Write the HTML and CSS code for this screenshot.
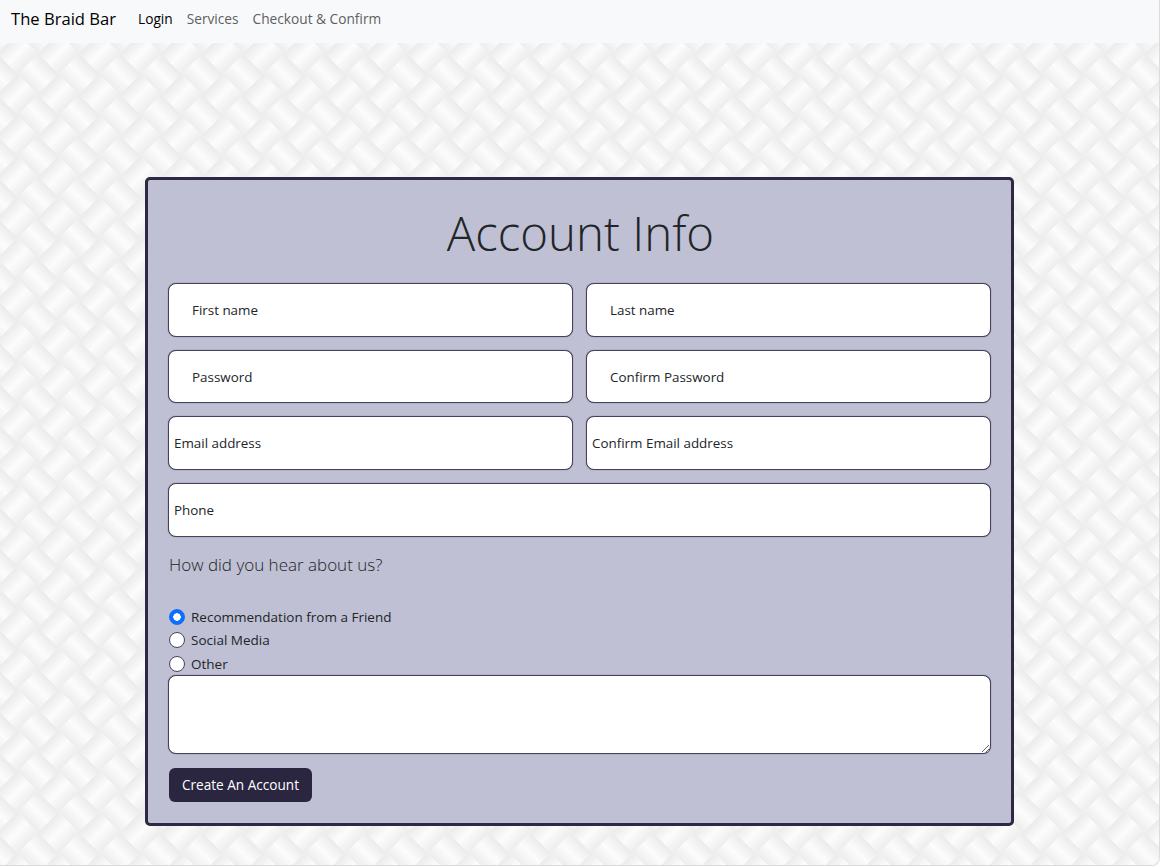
FILE: index.html
```html
<!DOCTYPE html>
<html lang="en">
<head>
<meta charset="utf-8">
<title>The Braid Bar</title>
<link rel="stylesheet" href="styles.css">
</head>
<body>
<div class="frame">
  <nav class="navbar">
    <a class="brand" href="#">The Braid Bar</a>
    <a class="nav-link active" href="#">Login</a>
    <a class="nav-link" href="#">Services</a>
    <a class="nav-link" href="#">Checkout &amp; Confirm</a>
  </nav>
  <main class="page">
    <form class="card">
      <h1 class="title">Account Info</h1>
      <div class="fields">
        <input class="field floating" type="text" placeholder="First name">
        <input class="field floating" type="text" placeholder="Last name">
        <input class="field floating" type="text" placeholder="Password">
        <input class="field floating" type="text" placeholder="Confirm Password">
        <input class="field" type="text" placeholder="Email address">
        <input class="field" type="text" placeholder="Confirm Email address">
        <input class="field wide" type="text" placeholder="Phone">
      </div>
      <h2 class="question">How did you hear about us?</h2>
      <div class="options">
        <label class="option"><input class="radio" type="radio" name="source" checked><span>Recommendation from a Friend</span></label>
        <label class="option"><input class="radio" type="radio" name="source"><span>Social Media</span></label>
        <label class="option"><input class="radio" type="radio" name="source"><span>Other</span></label>
      </div>
      <textarea class="notes"></textarea>
      <button class="submit" type="button">Create An Account</button>
    </form>
  </main>
</div>
</body>
</html>
```
FILE: styles.css
```css
* {
  box-sizing: border-box;
}

html,
body {
  margin: 0;
  height: 100%;
  background: #fff;
}

body {
  font-family: "Open Sans", "Noto Sans", sans-serif;
  color: #212529;
  overflow: hidden;
}

.frame {
  width: 1160px;
  height: 866px;
  display: flex;
  flex-direction: column;
  border-right: 1px solid #dcdcdc;
  border-bottom: 1px solid #dcdcdc;
  border-bottom-right-radius: 8px;
  overflow: hidden;
}

.navbar {
  height: 43px;
  flex: none;
  display: flex;
  align-items: center;
  padding: 0 0 6px 11px;
  background: #f8f9fa;
}

.brand {
  font-size: 16.6px;
  color: #000;
  text-decoration: none;
  margin-right: 22px;
}

.nav-link {
  font-size: 13.7px;
  color: #5d5f61;
  text-decoration: none;
  margin-right: 14px;
}

.nav-link.active {
  color: #000;
}

.page {
  flex: 1;
  padding-top: 134px;
  background-color: #f6f6f6;
  background-image: url("data:image/svg+xml,%3Csvg xmlns='http://www.w3.org/2000/svg' xmlns:xlink='http://www.w3.org/1999/xlink' width='41' height='41'%3E%3Cdefs%3E%3ClinearGradient id='a' gradientUnits='userSpaceOnUse' x1='10.2' y1='10.2' x2='30.8' y2='30.8'%3E%3Cstop offset='0' stop-color='%23ebebeb'/%3E%3Cstop offset='.5' stop-color='%23fcfcfc'/%3E%3Cstop offset='1' stop-color='%23ededed'/%3E%3C/linearGradient%3E%3ClinearGradient id='b' gradientUnits='userSpaceOnUse' x1='30.8' y1='10.2' x2='10.2' y2='30.8'%3E%3Cstop offset='0' stop-color='%23ebebeb'/%3E%3Cstop offset='.5' stop-color='%23fcfcfc'/%3E%3Cstop offset='1' stop-color='%23ededed'/%3E%3C/linearGradient%3E%3Cpolygon id='d' points='20.5,0 41,20.5 20.5,41 0,20.5' fill='url(%23b)'/%3E%3C/defs%3E%3Cuse xlink:href='%23d' x='-20.5' y='-20.5'/%3E%3Cuse xlink:href='%23d' x='20.5' y='-20.5'/%3E%3Cuse xlink:href='%23d' x='-20.5' y='20.5'/%3E%3Cuse xlink:href='%23d' x='20.5' y='20.5'/%3E%3Cpolygon points='20.5,0 41,20.5 20.5,41 0,20.5' fill='url(%23a)'/%3E%3C/svg%3E");
  background-size: 41px 41px;
  background-position: -3px -10px;
}

.card {
  width: 869px;
  height: 649px;
  margin: 0 auto;
  padding: 20px;
  background: #bfc0d3;
  border: 3px solid #2d2843;
  border-radius: 5px;
}

.title {
  margin: 0 0 18px;
  padding: 1px 0 1px 2px;
  font-size: 47.4px;
  line-height: 63px;
  font-weight: 300;
  text-align: center;
}

.fields {
  display: grid;
  grid-template-columns: 1fr 1fr;
  column-gap: 13px;
  row-gap: 13px;
  grid-auto-rows: 53.7px;
}

.field,
.notes {
  width: 100%;
  background: #fff;
  border: 1px solid #45415d;
  border-radius: 8px;
  box-shadow: 0 0 1px #45415d;
  font: inherit;
  outline: none;
}

.field {
  font-size: 13.4px;
  padding: 0 5px;
}

.field::placeholder {
  color: #212529;
  opacity: 1;
}

.field.floating {
  padding: 0 23px;
}

.field.wide {
  grid-column: 1 / -1;
}

.question {
  margin: 16px 0 0 1px;
  font-size: 17px;
  line-height: 24px;
  font-weight: 300;
}

.options {
  margin-top: 28px;
  display: flex;
  flex-direction: column;
}

.option {
  display: flex;
  align-items: center;
  gap: 6px;
  height: 23.5px;
  font-size: 13.5px;
}

.radio {
  appearance: none;
  width: 16px;
  height: 16px;
  margin: 0 0 0 1px;
  flex: none;
  background: #fff;
  border: 1px solid #45415d;
  border-radius: 50%;
}

.radio:checked {
  background: radial-gradient(circle, #fff 0 3.5px, #0d6efd 4px);
  border-color: #0d6efd;
}

.notes {
  display: block;
  height: 79px;
  margin-top: 0;
  resize: vertical;
}

.submit {
  display: block;
  height: 34px;
  width: 143px;
  margin: 14px 0 0 1px;
  padding: 0 0 2px;
  border: 0;
  border-radius: 6px;
  background: #2b2640;
  color: #fff;
  font: inherit;
  font-size: 13.6px;
}
```
